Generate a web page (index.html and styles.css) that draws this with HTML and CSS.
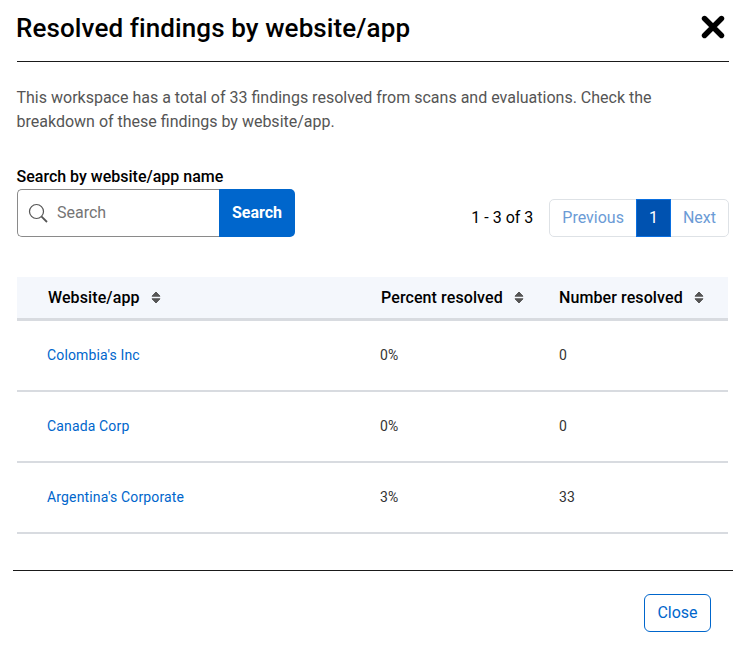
FILE: index.html
```html
<!DOCTYPE html>
<html lang="en">
<head>
    <meta charset="UTF-8">
    <title>Resolved findings by website/app</title>
    <link rel="stylesheet" href="styles.css">
</head>
<body>
    <div class="modal">
        <div class="modal-header">
            <h2>Resolved findings by website/app</h2>
            <button class="close-icon" aria-label="Close">
                <svg width="24" height="24" viewBox="0 0 24 24"><path d="M3.5 3.5L20.5 20.5M20.5 3.5L3.5 20.5" stroke="#000" stroke-width="5.4" stroke-linecap="round"/></svg>
            </button>
        </div>
        <div class="modal-body">
            <p class="intro">This workspace has a total of 33 findings resolved from scans and evaluations. Check the breakdown of these findings by website/app.</p>

            <div class="toolbar">
                <form class="search-form">
                    <label for="search">Search by website/app name</label>
                    <div class="search-box">
                        <div class="search-field">
                            <svg width="22" height="22" viewBox="0 0 22 22" fill="none"><circle cx="9.5" cy="9.5" r="7" stroke="#555" stroke-width="1.2"/><path d="M14.6 14.6L20 20" stroke="#555" stroke-width="1.8"/></svg>
                            <input type="text" id="search" placeholder="Search">
                        </div>
                        <button type="button" class="search-button">Search</button>
                    </div>
                </form>
                <div class="pagination">
                    <span class="page-count">1 - 3 of 3</span>
                    <div class="pages">
                        <a class="page">Previous</a>
                        <a class="page current">1</a>
                        <a class="page">Next</a>
                    </div>
                </div>
            </div>

            <table>
                <thead>
                    <tr>
                        <th class="col-name"><span class="th-inner">Website/app <svg class="sort" width="10" height="13" viewBox="0 0 10 13"><path d="M5 1L9 5.2H1ZM5 12L1 7.8H9Z" fill="#555" stroke="#555" stroke-linejoin="round"/></svg></span></th>
                        <th class="col-percent"><span class="th-inner">Percent resolved <svg class="sort" width="10" height="13" viewBox="0 0 10 13"><path d="M5 1L9 5.2H1ZM5 12L1 7.8H9Z" fill="#555" stroke="#555" stroke-linejoin="round"/></svg></span></th>
                        <th class="col-number"><span class="th-inner">Number resolved <svg class="sort" width="10" height="13" viewBox="0 0 10 13"><path d="M5 1L9 5.2H1ZM5 12L1 7.8H9Z" fill="#555" stroke="#555" stroke-linejoin="round"/></svg></span></th>
                    </tr>
                </thead>
                <tbody>
                    <tr>
                        <td><a href="#">Colombia's Inc</a></td>
                        <td>0%</td>
                        <td>0</td>
                    </tr>
                    <tr>
                        <td><a href="#">Canada Corp</a></td>
                        <td>0%</td>
                        <td>0</td>
                    </tr>
                    <tr>
                        <td><a href="#">Argentina's Corporate</a></td>
                        <td>3%</td>
                        <td>33</td>
                    </tr>
                </tbody>
            </table>
        </div>
        <div class="modal-footer">
            <button class="close-button">Close</button>
        </div>
    </div>
</body>
</html>
```

FILE: styles.css
```css
body {
    margin: 0;
    font-family: Roboto, "Liberation Sans", sans-serif;
    background-color: #ffffff;
    color: #000000;
}
.modal {
    width: 745px;
    height: 645px;
    padding: 0 12px 0 13px;
    box-sizing: border-box;
    overflow: hidden;
}
.modal-header {
    display: flex;
    align-items: center;
    justify-content: space-between;
    height: 61px;
    margin: 0 4px;
    border-bottom: 1px solid #1a1a1a;
}
.modal-header h2 {
    margin: 0 0 6px -1px;
    font-size: 26px;
    font-weight: 500;
    letter-spacing: 0.1px;
    line-height: 54px;
}
.close-icon {
    display: flex;
    margin: 0 4px 8px 0;
    padding: 0;
    border: none;
    background: none;
    cursor: pointer;
}
.modal-body {
    padding: 0 4px;
}
.intro {
    margin: 24px 0 0 -0.5px;
    font-size: 16px;
    line-height: 24px;
    color: #555555;
}
.toolbar {
    display: flex;
    justify-content: space-between;
    align-items: flex-end;
    margin-top: 34px;
}
.search-form label {
    display: block;
    font-size: 16px;
    font-weight: 500;
    line-height: 19px;
    margin: -1px 0 3px -0.5px;
}
.search-box {
    display: flex;
    width: 278px;
    height: 48px;
}
.search-field {
    display: flex;
    align-items: center;
    flex: 1;
    min-width: 0;
    gap: 8px;
    padding-left: 9px;
    border: 1px solid #8a8a8a;
    border-right: none;
    border-radius: 5px 0 0 5px;
}
.search-field input {
    flex: 1;
    min-width: 0;
    border: none;
    padding: 0 0 2px;
    outline: none;
    font-family: inherit;
    font-size: 16px;
}
.search-field input::placeholder {
    color: #757575;
}
.search-button {
    width: 76px;
    padding: 0 0 2px;
    border: none;
    border-radius: 0 5px 5px 0;
    background-color: #0066cc;
    color: #ffffff;
    font-family: inherit;
    font-size: 16px;
    font-weight: 700;
    cursor: pointer;
}
.pagination {
    display: flex;
    align-items: center;
    gap: 16px;
}
.page-count {
    font-size: 16px;
    margin: 0 0 2px -1px;
}
.pages {
    display: flex;
    height: 38px;
    border: 1px solid #dee2e6;
    border-radius: 5px;
    box-sizing: border-box;
}
.page {
    display: flex;
    align-items: center;
    padding: 0 12px 2px;
    font-size: 16px;
    color: #6b9bd6;
}
.page.current {
    margin: -1px 0;
    padding: 0 12px 2px;
    background-color: #0052b0;
    border: 1px solid #0a6fe0;
    color: #ffffff;
}
table {
    width: 711px;
    margin-top: 40px;
    border-collapse: collapse;
    table-layout: fixed;
}
th {
    height: 41px;
    padding: 0 0 0 1px;
    background-color: #f4f7fc;
    border-bottom: 3px solid #d8dbe0;
    font-size: 16px;
    font-weight: 500;
    letter-spacing: 0.1px;
    text-align: left;
}
.th-inner {
    display: flex;
    align-items: center;
    gap: 11px;
}
.col-name {
    width: 363px;
    padding-left: 31px;
    box-sizing: border-box;
}
.col-percent {
    width: 178px;
}
.col-number {
    padding-left: 0;
}
.sort {
    flex: none;
}
td {
    height: 71px;
    padding: 0;
    box-sizing: border-box;
    border-bottom: 2px solid #d8dbe0;
    font-size: 14px;
    letter-spacing: 0.15px;
    color: #333333;
}
td:first-child {
    padding-left: 30px;
}
td a {
    color: #0066cc;
    text-decoration: none;
}
.modal-footer {
    display: flex;
    justify-content: flex-end;
    margin-top: 36px;
    padding: 23px 22px 0 0;
    border-top: 1px solid #1a1a1a;
}
.close-button {
    width: 67px;
    height: 38px;
    padding: 0 0 1px;
    border: 1px solid #0066cc;
    border-radius: 6px;
    background-color: #ffffff;
    color: #0066cc;
    font-family: inherit;
    font-size: 16px;
    cursor: pointer;
}
```
